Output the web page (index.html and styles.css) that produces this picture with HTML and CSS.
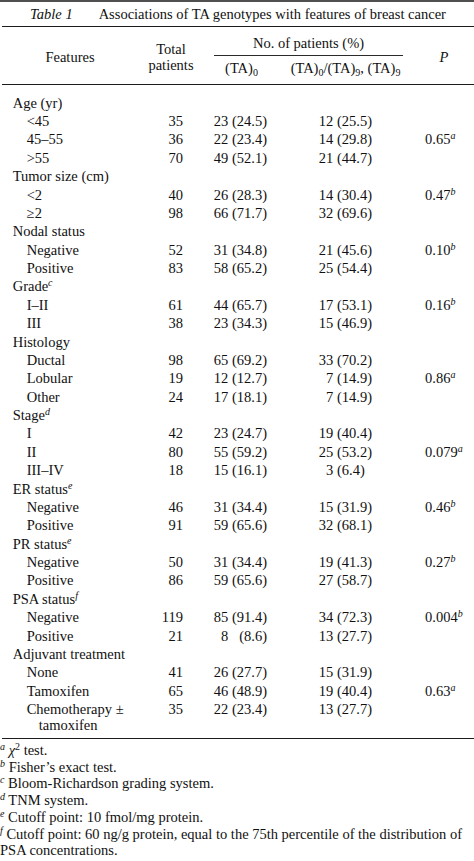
FILE: index.html
```html
<!DOCTYPE html>
<html>
<head>
<meta charset="utf-8">
<title>Table 1</title>
<link rel="stylesheet" href="styles.css">
</head>
<body>
<div class="topbar"></div>
<div class="caption"><span class="tlabel">Table 1</span>Associations of TA genotypes with features of breast cancer</div>
<table class="tbl">
<colgroup>
<col class="c1"><col class="c2"><col class="c3"><col class="c4"><col class="c5">
</colgroup>
<thead>
<tr>
<th rowspan="2" class="hfeat">Features</th>
<th rowspan="2" class="htotal">Total<br>patients</th>
<th colspan="2" class="hgroup"><div class="grouprule">No. of patients (%)</div></th>
<th rowspan="2" class="hp"><i>P</i></th>
</tr>
<tr>
<th class="hsub">(TA)<sub>0</sub></th>
<th class="hsub">(TA)<sub>0</sub>/(TA)<sub>9</sub>, (TA)<sub>9</sub></th>
</tr>
</thead>
<tbody>
<tr class="first"><td class="cat">Age (yr)</td><td></td><td></td><td></td><td></td></tr>
<tr><td class="sub">&lt;45</td><td class="n">35</td><td class="a">23 (24.5)</td><td class="b">12 (25.5)</td><td class="p"></td></tr>
<tr><td class="sub">45–55</td><td class="n">36</td><td class="a">22 (23.4)</td><td class="b">14 (29.8)</td><td class="p">0.65<sup>a</sup></td></tr>
<tr><td class="sub">&gt;55</td><td class="n">70</td><td class="a">49 (52.1)</td><td class="b">21 (44.7)</td><td class="p"></td></tr>
<tr><td class="cat">Tumor size (cm)</td><td></td><td></td><td></td><td></td></tr>
<tr><td class="sub">&lt;2</td><td class="n">40</td><td class="a">26 (28.3)</td><td class="b">14 (30.4)</td><td class="p">0.47<sup>b</sup></td></tr>
<tr><td class="sub">≥2</td><td class="n">98</td><td class="a">66 (71.7)</td><td class="b">32 (69.6)</td><td class="p"></td></tr>
<tr><td class="cat">Nodal status</td><td></td><td></td><td></td><td></td></tr>
<tr><td class="sub">Negative</td><td class="n">52</td><td class="a">31 (34.8)</td><td class="b">21 (45.6)</td><td class="p">0.10<sup>b</sup></td></tr>
<tr><td class="sub">Positive</td><td class="n">83</td><td class="a">58 (65.2)</td><td class="b">25 (54.4)</td><td class="p"></td></tr>
<tr><td class="cat">Grade<sup>c</sup></td><td></td><td></td><td></td><td></td></tr>
<tr><td class="sub">I–II</td><td class="n">61</td><td class="a">44 (65.7)</td><td class="b">17 (53.1)</td><td class="p">0.16<sup>b</sup></td></tr>
<tr><td class="sub">III</td><td class="n">38</td><td class="a">23 (34.3)</td><td class="b">15 (46.9)</td><td class="p"></td></tr>
<tr><td class="cat">Histology</td><td></td><td></td><td></td><td></td></tr>
<tr><td class="sub">Ductal</td><td class="n">98</td><td class="a">65 (69.2)</td><td class="b">33 (70.2)</td><td class="p"></td></tr>
<tr><td class="sub">Lobular</td><td class="n">19</td><td class="a">12 (12.7)</td><td class="b">7 (14.9)</td><td class="p">0.86<sup>a</sup></td></tr>
<tr><td class="sub">Other</td><td class="n">24</td><td class="a">17 (18.1)</td><td class="b">7 (14.9)</td><td class="p"></td></tr>
<tr><td class="cat">Stage<sup>d</sup></td><td></td><td></td><td></td><td></td></tr>
<tr><td class="sub">I</td><td class="n">42</td><td class="a">23 (24.7)</td><td class="b">19 (40.4)</td><td class="p"></td></tr>
<tr><td class="sub">II</td><td class="n">80</td><td class="a">55 (59.2)</td><td class="b">25 (53.2)</td><td class="p">0.079<sup>a</sup></td></tr>
<tr><td class="sub">III–IV</td><td class="n">18</td><td class="a">15 (16.1)</td><td class="b">3 (6.4)&#8199;</td><td class="p"></td></tr>
<tr><td class="cat">ER status<sup>e</sup></td><td></td><td></td><td></td><td></td></tr>
<tr><td class="sub">Negative</td><td class="n">46</td><td class="a">31 (34.4)</td><td class="b">15 (31.9)</td><td class="p">0.46<sup>b</sup></td></tr>
<tr><td class="sub">Positive</td><td class="n">91</td><td class="a">59 (65.6)</td><td class="b">32 (68.1)</td><td class="p"></td></tr>
<tr><td class="cat">PR status<sup>e</sup></td><td></td><td></td><td></td><td></td></tr>
<tr><td class="sub">Negative</td><td class="n">50</td><td class="a">31 (34.4)</td><td class="b">19 (41.3)</td><td class="p">0.27<sup>b</sup></td></tr>
<tr><td class="sub">Positive</td><td class="n">86</td><td class="a">59 (65.6)</td><td class="b">27 (58.7)</td><td class="p"></td></tr>
<tr><td class="cat">PSA status<sup>f</sup></td><td></td><td></td><td></td><td></td></tr>
<tr><td class="sub">Negative</td><td class="n">119</td><td class="a">85 (91.4)</td><td class="b">34 (72.3)</td><td class="p">0.004<sup>b</sup></td></tr>
<tr><td class="sub">Positive</td><td class="n">21</td><td class="a">8&#8199; (8.6)</td><td class="b">13 (27.7)</td><td class="p"></td></tr>
<tr><td class="cat">Adjuvant treatment</td><td></td><td></td><td></td><td></td></tr>
<tr><td class="sub">None</td><td class="n">41</td><td class="a">26 (27.7)</td><td class="b">15 (31.9)</td><td class="p"></td></tr>
<tr><td class="sub">Tamoxifen</td><td class="n">65</td><td class="a">46 (48.9)</td><td class="b">19 (40.4)</td><td class="p">0.63<sup>a</sup></td></tr>
<tr class="last"><td class="sub wrap">Chemotherapy ±<br>tamoxifen</td><td class="n">35</td><td class="a">22 (23.4)</td><td class="b">13 (27.7)</td><td class="p"></td></tr>
</tbody>
</table>
<div class="notes">
<div class="note"><sup>a</sup> <i class="chi">χ</i><sup class="pow">2</sup> test.</div>
<div class="note"><sup>b</sup> Fisher’s exact test.</div>
<div class="note"><sup>c</sup> Bloom-Richardson grading system.</div>
<div class="note"><sup>d</sup> TNM system.</div>
<div class="note"><sup>e</sup> Cutoff point: 10 fmol/mg protein.</div>
<div class="note"><sup>f</sup> Cutoff point: 60 ng/g protein, equal to the 75th percentile of the distribution of<br>PSA concentrations.</div>
</div>
</body>
</html>
```
FILE: styles.css
```css
html, body {
  margin: 0;
  padding: 0;
  background: #ffffff;
}
body {
  width: 474px;
  overflow: hidden;
  color: #111111;
  font-family: "Liberation Serif", "Times New Roman", serif;
  font-size: 14.5px;
}
.topbar {
  height: 2px;
  background: #505050;
}
.caption {
  margin-left: 2px;
  padding: 4px 0 4px;
  line-height: 16px;
  text-align: center;
  border-bottom: 1.5px solid #1c1c1c;
  white-space: nowrap;
}
.tlabel {
  font-style: italic;
  margin-right: 26px;
}
.tbl {
  margin-left: 2px;
  width: 474px;
  table-layout: fixed;
  border-collapse: collapse;
  border-spacing: 0;
}
.c1 { width: 136px; }
.c2 { width: 66px; }
.c3 { width: 75px; }
.c4 { width: 133px; }
.c5 { width: 64px; }
th {
  font-weight: normal;
  line-height: 16px;
  padding: 0;
  text-align: center;
  white-space: nowrap;
}
.hfeat, .htotal, .hp {
  vertical-align: middle;
  padding-top: 3px;
  border-bottom: 1.5px solid #1c1c1c;
}
.hgroup {
  padding: 8px 0 0;
}
.grouprule {
  margin: 0 9px 0 10px;
  padding-bottom: 4px;
  border-bottom: 1px solid #2a2a2a;
}
.hsub {
  padding: 4px 0 8px;
  border-bottom: 1.5px solid #1c1c1c;
}
.hp i {
  font-style: italic;
}
sub {
  font-size: 10px;
  line-height: 0;
  vertical-align: -3px;
}
td {
  padding: 1.2px 0;
  line-height: 16px;
  white-space: nowrap;
  vertical-align: top;
}
tr.first td {
  padding-top: 9.7px;
}
tr.last td {
  padding-bottom: 5px;
  border-bottom: 1.5px solid #1c1c1c;
}
.cat {
  padding-left: 10.7px;
}
.sub {
  padding-left: 24.7px;
}
.wrap {
  white-space: normal;
  padding-left: 36.7px;
  text-indent: -12px;
}
.n {
  text-align: right;
  padding-right: 21px;
}
.a {
  text-align: right;
  padding-right: 12px;
}
.b {
  text-align: right;
  padding-right: 40px;
}
.p {
  text-align: left;
  padding-left: 13px;
}
sup {
  font-size: 10px;
  font-style: italic;
  line-height: 0;
  vertical-align: 5px;
}
.notes {
  padding-top: 3px;
  line-height: 16.7px;
}
.note {
  white-space: nowrap;
}
.chi {
  font-style: italic;
}
.note sup.pow {
  font-style: normal;
}
```
